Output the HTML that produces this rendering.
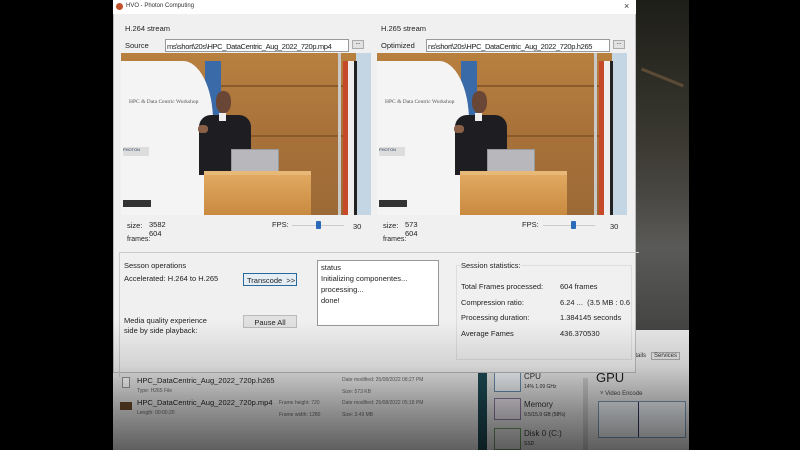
<!DOCTYPE html>
<html><head><style>
*{margin:0;padding:0;box-sizing:border-box}
body{width:800px;height:450px;background:#000;position:relative;overflow:hidden;font-family:"Liberation Sans",sans-serif;font-size:7.5px;color:#222}
.a{position:absolute;white-space:nowrap}
.vid{position:absolute;width:250px;height:162px;background:#b47a3c;overflow:hidden}
.vid div{position:absolute}
</style></head><body>
<!-- right rock image -->
<div class="a" style="left:636px;top:0;width:53px;height:330px;background:linear-gradient(180deg,#1e1e18 0%,#2e2e26 25%,#3c3a32 45%,#4a4844 60%,#5a5a58 75%,#444442 100%)"></div>
<div class="a" style="left:640px;top:76px;width:45px;height:3px;background:#5a4a36;transform:rotate(22deg)"></div>
<!-- task manager -->
<div class="a" style="left:478px;top:330px;width:211px;height:120px;background:#e8e8e8"></div>
<div class="a" style="left:478px;top:365px;width:9px;height:85px;background:#1d4b55"></div>
<div class="a" style="left:632px;top:353px;font-size:6px;color:#333">etails&nbsp;&nbsp; <span style="border:1px solid #aaa;padding:0 2px">Services</span></div>
<div class="a" style="left:494px;top:370px;width:27px;height:22px;border:1px solid #6a8fb0;background:#f4f8fc"></div>
<div class="a" style="left:524px;top:372px;font-size:8px;color:#333">CPU<br><span style="font-size:5px">14% 1.09 GHz</span></div>
<div class="a" style="left:494px;top:398px;width:27px;height:22px;border:1px solid #907aa0;background:#efeaf3"></div>
<div class="a" style="left:524px;top:400px;font-size:8px;color:#333">Memory<br><span style="font-size:5px">9.5/15.9 GB (58%)</span></div>
<div class="a" style="left:494px;top:428px;width:27px;height:22px;border:1px solid #6a9a60"></div>
<div class="a" style="left:524px;top:429px;font-size:8px;color:#333">Disk 0 (C:)<br><span style="font-size:5px">SSD</span></div>
<div class="a" style="left:583px;top:378px;width:5px;height:72px;background:#ccc"></div>
<div class="a" style="left:596px;top:370px;font-size:13px;color:#222">GPU</div>
<div class="a" style="left:600px;top:391px;font-size:6px;color:#444">˅ Video Encode</div>
<div class="a" style="left:598px;top:401px;width:88px;height:37px;border:1px solid #7a9ab8;background:#f2f6fa"></div>
<div class="a" style="left:638px;top:402px;width:1px;height:35px;background:#336"></div>
<!-- explorer list -->
<div class="a" style="left:113px;top:373px;width:365px;height:77px;background:#ececec"></div>
<div class="a" style="left:122px;top:377px;width:8px;height:11px;border:1px solid #999;background:#fff"></div>
<div class="a" style="left:137px;top:376px;font-size:7.5px;color:#222">HPC_DataCentric_Aug_2022_720p.h265<br><span style="font-size:5px;color:#666">Type: H265 File</span></div>
<div class="a" style="left:342px;top:377px;font-size:5px;color:#666">Date modified: 25/08/2022 08:27 PM<br><br>Size: 573 KB</div>
<div class="a" style="left:120px;top:402px;width:12px;height:8px;background:#6a4a2a"></div>
<div class="a" style="left:137px;top:398px;font-size:7.5px;color:#222">HPC_DataCentric_Aug_2022_720p.mp4<br><span style="font-size:5px;color:#666">Length: 00:00:20</span></div>
<div class="a" style="left:279px;top:400px;font-size:5px;color:#666">Frame height: 720<br><br>Frame width: 1280</div>
<div class="a" style="left:342px;top:400px;font-size:5px;color:#666">Date modified: 25/08/2022 05:18 PM<br><br>Size: 3.49 MB</div>
<!-- main window -->
<div class="a" style="left:113px;top:0;width:523px;height:373px;background:#f0f0f0;border:1px solid #bbb"></div>
<div class="a" style="left:113px;top:0;width:523px;height:14px;background:#fff"></div>
<div class="a" style="left:116px;top:3px;width:7px;height:7px;border-radius:50%;background:#c0502a"></div>
<div class="a" style="left:126px;top:3px;font-size:6px;color:#333">HVO - Photon Computing</div>
<div class="a" style="left:624px;top:1px;font-size:9px;color:#333">×</div>
<div class="a" style="left:125px;top:24px">H.264 stream</div>
<div class="a" style="left:381px;top:24px">H.265 stream</div>
<div class="a" style="left:125px;top:41px">Source</div>
<div class="a" style="left:165px;top:39px;width:184px;height:13px;background:#fff;border:1px solid #999;font-size:7.5px;letter-spacing:-0.35px;padding:2px 1px;overflow:hidden">ms\short\20s\HPC_DataCentric_Aug_2022_720p.mp4</div>
<div class="a" style="left:352px;top:40px;width:12px;height:9px;background:#e1e1e1;border:1px solid #aaa;font-size:6px;text-align:center;line-height:5px">...</div>
<div class="a" style="left:381px;top:41px">Optimized</div>
<div class="a" style="left:426px;top:39px;width:184px;height:13px;background:#fff;border:1px solid #999;font-size:7.5px;letter-spacing:-0.35px;padding:2px 1px;overflow:hidden">ns\short\20s\HPC_DataCentric_Aug_2022_720p.h265</div>
<div class="a" style="left:613px;top:40px;width:12px;height:9px;background:#e1e1e1;border:1px solid #aaa;font-size:6px;text-align:center;line-height:5px">...</div>
<!-- videos -->
<div class="vid" style="left:121px;top:53px">
 <div style="left:0;top:0;width:250px;height:162px;background:linear-gradient(180deg,#b8803f,#a8713a 50%,#9c6a36)"></div>
 <div style="left:100px;top:32px;width:150px;height:2px;background:#8a5a2a"></div>
 <div style="left:100px;top:82px;width:150px;height:2px;background:#8a5a2a"></div>
 <div style="left:84px;top:8px;width:16px;height:154px;background:#3a6aa8"></div>
 <div style="left:0;top:8px;width:92px;height:154px;background:#f4f4f4;border-radius:0 30px 0 0/0 60px 0 0"></div>
 <div style="left:8px;top:46px;font-size:5.5px;color:#555;font-family:'Liberation Serif',serif">HPC &amp; Data Centric Workshop</div>
 <div style="left:2px;top:94px;width:26px;height:9px;background:#ddd;font-size:4px;color:#235">PHOTON</div>
 <div style="left:2px;top:147px;width:28px;height:7px;background:#333"></div>
 <div style="left:217px;top:0;width:3px;height:162px;background:#c8c8c8"></div>
 <div style="left:235px;top:0;width:15px;height:162px;background:#c4d6e4"></div>
 <div style="left:222px;top:8px;width:5px;height:154px;background:#c64a2a"></div>
 <div style="left:227px;top:8px;width:6px;height:154px;background:#eee"></div>
 <div style="left:233px;top:8px;width:3px;height:154px;background:#222"></div>
 <div style="left:78px;top:62px;width:52px;height:60px;background:#1e1e22;border-radius:12px 12px 0 0"></div>
 <div style="left:95px;top:38px;width:15px;height:22px;background:#6a4636;border-radius:45%"></div>
 <div style="left:98px;top:60px;width:7px;height:8px;background:#eee"></div>
 <div style="left:77px;top:72px;width:10px;height:8px;background:#8a6048;border-radius:40%"></div>
 <div style="left:110px;top:96px;width:48px;height:24px;background:#b8b8bc;border:1px solid #999"></div>
 <div style="left:83px;top:118px;width:107px;height:44px;background:linear-gradient(180deg,#e0a860,#c98a40);border-top:4px solid #e8b878"></div>
</div>
<div class="vid" style="left:377px;top:53px">
 <div style="left:0;top:0;width:250px;height:162px;background:linear-gradient(180deg,#b8803f,#a8713a 50%,#9c6a36)"></div>
 <div style="left:100px;top:32px;width:150px;height:2px;background:#8a5a2a"></div>
 <div style="left:100px;top:82px;width:150px;height:2px;background:#8a5a2a"></div>
 <div style="left:84px;top:8px;width:16px;height:154px;background:#3a6aa8"></div>
 <div style="left:0;top:8px;width:92px;height:154px;background:#f4f4f4;border-radius:0 30px 0 0/0 60px 0 0"></div>
 <div style="left:8px;top:46px;font-size:5.5px;color:#555;font-family:'Liberation Serif',serif">HPC &amp; Data Centric Workshop</div>
 <div style="left:2px;top:94px;width:26px;height:9px;background:#ddd;font-size:4px;color:#235">PHOTON</div>
 <div style="left:2px;top:147px;width:28px;height:7px;background:#333"></div>
 <div style="left:217px;top:0;width:3px;height:162px;background:#c8c8c8"></div>
 <div style="left:235px;top:0;width:15px;height:162px;background:#c4d6e4"></div>
 <div style="left:222px;top:8px;width:5px;height:154px;background:#c64a2a"></div>
 <div style="left:227px;top:8px;width:6px;height:154px;background:#eee"></div>
 <div style="left:233px;top:8px;width:3px;height:154px;background:#222"></div>
 <div style="left:78px;top:62px;width:52px;height:60px;background:#1e1e22;border-radius:12px 12px 0 0"></div>
 <div style="left:95px;top:38px;width:15px;height:22px;background:#6a4636;border-radius:45%"></div>
 <div style="left:98px;top:60px;width:7px;height:8px;background:#eee"></div>
 <div style="left:77px;top:72px;width:10px;height:8px;background:#8a6048;border-radius:40%"></div>
 <div style="left:110px;top:96px;width:48px;height:24px;background:#b8b8bc;border:1px solid #999"></div>
 <div style="left:83px;top:118px;width:107px;height:44px;background:linear-gradient(180deg,#e0a860,#c98a40);border-top:4px solid #e8b878"></div>
</div>
<!-- size/fps -->
<div class="a" style="left:127px;top:221px">size:</div>
<div class="a" style="left:149px;top:220px;line-height:9px">3582<br>604</div>
<div class="a" style="left:127px;top:236px;font-size:7px">frames:</div>
<div class="a" style="left:272px;top:220px">FPS:</div>
<div class="a" style="left:292px;top:225px;width:52px;height:1px;background:#ccc"></div>
<div class="a" style="left:316px;top:221px;width:5px;height:8px;background:#2a6ab8;border-radius:1px"></div>
<div class="a" style="left:353px;top:222px">30</div>
<div class="a" style="left:383px;top:221px">size:</div>
<div class="a" style="left:405px;top:220px;line-height:9px">573<br>604</div>
<div class="a" style="left:383px;top:236px;font-size:7px">frames:</div>
<div class="a" style="left:522px;top:220px">FPS:</div>
<div class="a" style="left:543px;top:225px;width:52px;height:1px;background:#ccc"></div>
<div class="a" style="left:571px;top:221px;width:5px;height:8px;background:#2a6ab8;border-radius:1px"></div>
<div class="a" style="left:610px;top:222px">30</div>
<!-- operations panel -->
<div class="a" style="left:119px;top:252px;width:520px;height:125px;border-top:1px solid #ccc;border-left:1px solid #ccc"></div>
<div class="a" style="left:124px;top:261px">Sesson operations</div>
<div class="a" style="left:124px;top:274px">Accelerated: H.264 to H.265</div>
<div class="a" style="left:243px;top:273px;width:54px;height:13px;border:1px solid #2a6a9a;background:#e5eef5;padding:2px 0 0 3px">Transcode &nbsp;&gt;&gt;</div>
<div class="a" style="left:124px;top:316px;line-height:10px">Media quality experience<br>side by side playback:</div>
<div class="a" style="left:243px;top:315px;width:54px;height:13px;border:1px solid #bbb;background:#e1e1e1;text-align:center;padding-top:2px">Pause All</div>
<div class="a" style="left:317px;top:260px;width:122px;height:66px;background:#fff;border:1px solid #999;line-height:11px;padding:1px 3px">status<br>Initializing componentes...<br>processing...<br>done!</div>
<div class="a" style="left:456px;top:265px;width:176px;height:95px;border:1px solid #ddd"></div>
<div class="a" style="left:461px;top:261px;background:#f0f0f0">Session statistics:</div>
<div class="a" style="left:461px;top:279px;line-height:15.5px">Total Frames processed:<br>Compression ratio:<br>Processing duration:<br>Average Fames</div>
<div class="a" style="left:560px;top:279px;line-height:15.5px">604 frames<br>6.24 ... &nbsp;(3.5 MB : 0.6<br>1.384145 seconds<br>436.370530</div>
<!-- vignette -->
<div class="a" style="left:0;top:320px;width:800px;height:130px;background:linear-gradient(180deg,rgba(0,0,0,0) 0%,rgba(0,0,0,0.12) 35%,rgba(0,0,0,0.4) 70%,rgba(0,0,0,0.6) 100%)"></div>
<div class="a" style="left:689px;top:0;width:111px;height:450px;background:#000"></div>
</body></html>
